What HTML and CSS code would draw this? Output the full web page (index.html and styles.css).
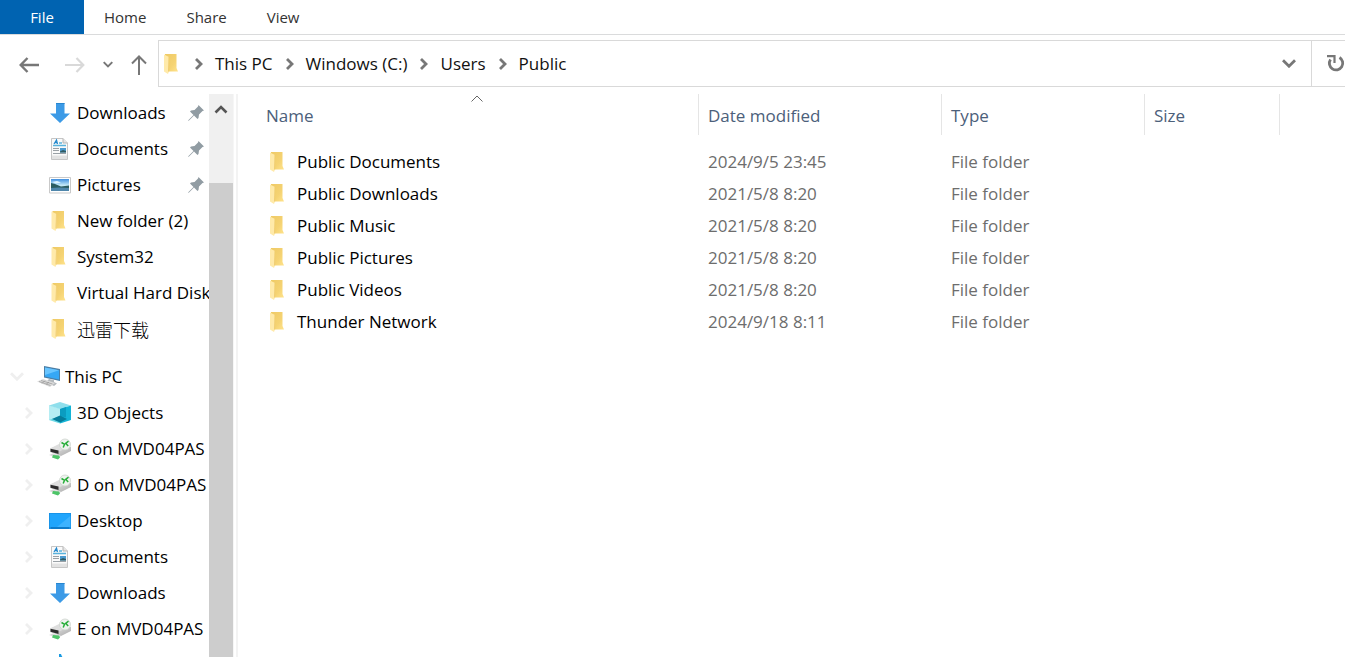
FILE: index.html
```html
<!DOCTYPE html>
<html lang="en">
<head>
<meta charset="utf-8">
<title>Public</title>
<link rel="stylesheet" href="styles.css">
</head>
<body>
<svg class="sprite" aria-hidden="true">
  <defs>
    <linearGradient id="gold" x1="0" y1="0" x2="1" y2="1"><stop offset="0" stop-color="#efca65"/><stop offset=".6" stop-color="#f5d373"/><stop offset="1" stop-color="#ffe38c"/></linearGradient>
    <linearGradient id="sky" x1="0" y1="0" x2="0" y2="1"><stop offset="0" stop-color="#3f8fe0"/><stop offset=".5" stop-color="#bfe6f7"/><stop offset="1" stop-color="#e6f5fa"/></linearGradient>
    <linearGradient id="metal" x1="0" y1="0" x2="1" y2="1"><stop offset="0" stop-color="#f0f0f0"/><stop offset="1" stop-color="#a9a9a9"/></linearGradient>
  </defs>
  <symbol id="folder" viewBox="0 0 14 20">
    <path d="M1 0H12.500V14L14 17.500H4L1 15Z" fill="url(#gold)"/>
    <path d="M0 0.500L5 3V17.500L4 20L0 17.500Z" fill="#ffeaaa"/>
    <path d="M4.500 3H5.200V17.500H4Z" fill="#f0cd72"/>
  </symbol>
  <symbol id="download" viewBox="0 0 22 22">
    <path d="M7 1H15.500V11.500H21L11 21L1 11.500H7Z" fill="#3c9ae6"/>
    <path d="M7 1H15.500V2H7Z" fill="#2786cf"/>
  </symbol>
  <symbol id="document" viewBox="0 0 22 22">
    <path d="M2.500 .5H14L18.500 5V21.500H2.500Z" fill="#fafafa" stroke="#c6c6c6"/>
    <path d="M14 .5V5H18.500" fill="#e5e5e5" stroke="#b5b5b5"/>
    <path d="M5 6L7.500 2L8.500 6M6 4.700H8.500" fill="none" stroke="#2287cc" stroke-width="1.200"/>
    <path d="M10 5H13M4 7.500H17" stroke="#59b2dc" stroke-width="1.300"/>
    <path d="M4 10.500H10M4 12.500H10M4 15.500H17" stroke="#9aa1a6"/>
    <path d="M11 10H17V14.500H11Z" fill="#4b9bd0"/>
    <path d="M11 13.500L14 12L17 13V14.500H11Z" fill="#2f5a63"/>
    <path d="M3 17.500H18V21H3Z" fill="#e2e2e2"/>
  </symbol>
  <symbol id="picture" viewBox="0 0 22 22">
    <path d="M.5 3.500H21.500V19H.5Z" fill="#fff" stroke="#c9c9c9"/>
    <path d="M2 5H20V17H2Z" fill="url(#sky)"/>
    <path d="M2 9L6 10L12 12.500L20 11.500V14.500H2Z" fill="#2b5c60"/>
    <path d="M2 14L10 13.500L20 14V17H2Z" fill="#4f86ab"/>
    <path d="M3 8L8 7L12 8.500L7 9.500Z" fill="#dff4ff"/>
  </symbol>
  <symbol id="pin" viewBox="0 0 16 16">
    <path d="M10.500 0L16 5.500L14.500 6L11 9.500L10.500 13L9.500 14L6 10.500L1 15.500L0 16L.5 15L5.500 10L2 6.500L3 5.500L6.500 5L10 1.500Z" fill="#919ca3"/>
  </symbol>
  <symbol id="computer" viewBox="0 0 24 22">
    <path d="M7 0L23 3V15L7 11.500Z" fill="#4b7ea5"/>
    <path d="M8 1.500L22 4.200V13.500L8 10.500Z" fill="#35a7f5"/>
    <path d="M8 1.500L22 4.200L8 9Z" fill="#69c5ff"/>
    <path d="M12 13L17 14V16L20 17.500L17 20L9 16Z" fill="#b4b9bd"/>
    <path d="M0 15.500L6 13L18 17L13 21Z" fill="#dcdcdc"/>
    <path d="M2 15.500L13.500 19.500M4 14.500L15.500 18M5 17.500L8 14.500M9 18.500L12 16" stroke="#969696" stroke-width=".7"/>
  </symbol>
  <symbol id="cube" viewBox="0 0 22 22">
    <path d="M0 3.500L11 0L22 3.500L11 7Z" fill="#8fdfec"/>
    <path d="M0 3.500L11 7V21.500L0 18Z" fill="#6bd8e5"/>
    <path d="M22 3.500L11 7V21.500L22 18Z" fill="#14b4d6"/>
    <path d="M0 3.500L11 7V14L0 18Z" fill="#b5edf3"/>
    <path d="M11 7L17 5V15.500L11 14Z" fill="#0b9cc0"/>
    <path d="M11 13.500L18 17L11 20.500L3 17Z" fill="#067d9b"/>
  </symbol>
  <symbol id="drive" viewBox="0 0 22 22">
    <path d="M1 10.500L10 7L22 9V13L12 18L1 14Z" fill="url(#metal)"/>
    <path d="M1 10.500L10 6L20 9L11 13Z" fill="#dedede"/>
    <path d="M1.500 10.800L9.500 12.500V16L1.500 13.800Z" fill="#2c2c2c"/>
    <path d="M0 17L9 20L12 18L4 15.500Z" fill="#d7d7d7"/>
    <path d="M4 17L10 17.500L11 19.500L9 21.500L3 19.500Z" fill="#4dc468"/>
    <circle cx="16" cy="6.500" r="5.500" fill="#eef3ee" stroke="#c8cfc8" stroke-width=".7"/>
    <path d="M12.500 4.500L15.500 6.300L14.200 9.500M19.500 3.200L16.700 5.300L19.200 8" fill="none" stroke="#28ae3a" stroke-width="1.500"/>
  </symbol>
  <symbol id="desktop" viewBox="0 0 22 22">
    <path d="M0 3H22V19H0Z" fill="#168de2"/>
    <path d="M.7 3.700H21.300V17H.7Z" fill="#20a5fc"/>
    <path d="M8 17L21.300 6V17Z" fill="#3db3ff"/>
    <path d="M2 18H20" stroke="#076bb2"/>
  </symbol>
  <symbol id="music" viewBox="0 0 22 22">
    <path d="M10 0H12C13 5 19 6 17 13C16 10 14 9 12 9V17A4 3 0 1 1 10 15Z" fill="#199ae2"/>
  </symbol>
  <symbol id="chevron" viewBox="0 0 10 12">
    <path d="M2 1L7 6L2 11" fill="none" stroke="currentColor" stroke-width="2.800"/>
  </symbol>
  <symbol id="chevron-down" viewBox="0 0 14 9">
    <path d="M1 1.200L7 7.200L13 1.200" fill="none" stroke="currentColor" stroke-width="2.800"/>
  </symbol>
</svg>

<nav class="ribbon" aria-label="Ribbon">
  <button class="tab tab-file">File</button>
  <button class="tab">Home</button>
  <button class="tab">Share</button>
  <button class="tab">View</button>
</nav>

<header class="toolbar">
  <div class="history">
    <button class="icon-button" aria-label="Back"><svg width="20" height="16" viewBox="0 0 20 16"><path d="M8.500 1L1.700 8L8.500 15M2 8H20" fill="none" stroke="currentColor" stroke-width="2.400"/></svg></button>
    <button class="icon-button forward" aria-label="Forward" disabled><svg width="20" height="16" viewBox="0 0 20 16"><path d="M11.500 1L18.300 8L11.500 15M18 8H0" fill="none" stroke="currentColor" stroke-width="2.200"/></svg></button>
    <button class="icon-button recent" aria-label="Recent locations"><svg width="10" height="7"><use href="#chevron-down"/></svg></button>
    <button class="icon-button up" aria-label="Up"><svg width="16" height="20" viewBox="0 0 16 20"><path d="M1 8.500L8 1.500L15 8.500M8 2V20" fill="none" stroke="currentColor" stroke-width="2"/></svg></button>
  </div>
  <div class="address">
    <svg class="folder" width="14" height="20"><use href="#folder"/></svg>
    <svg class="separator" width="10" height="12"><use href="#chevron"/></svg>
    <a href="#">This PC</a>
    <svg class="separator" width="10" height="12"><use href="#chevron"/></svg>
    <a href="#">Windows (C:)</a>
    <svg class="separator" width="10" height="12"><use href="#chevron"/></svg>
    <a href="#">Users</a>
    <svg class="separator" width="10" height="12"><use href="#chevron"/></svg>
    <a href="#">Public</a>
    <button class="icon-button previous" aria-label="Previous locations"><svg width="14" height="9"><use href="#chevron-down"/></svg></button>
  </div>
  <button class="icon-button refresh" aria-label="Refresh"><svg width="18" height="18" viewBox="0 0 18 18"><path d="M12.500 2.500A6.700 6.700 0 1 1 3.500 4.500" fill="none" stroke="currentColor" stroke-width="2.800"/><path d="M0 1.200H7.500V8" fill="none" stroke="currentColor" stroke-width="2.200"/></svg></button>
</header>

<div class="workspace">
  <nav class="sidebar" aria-label="Folders">
    <ul class="tree quick">
      <li><a href="#" class="node"><svg class="node-icon"><use href="#download"/></svg><span class="label">Downloads</span><svg class="pin"><use href="#pin"/></svg></a></li>
      <li><a href="#" class="node"><svg class="node-icon"><use href="#document"/></svg><span class="label">Documents</span><svg class="pin"><use href="#pin"/></svg></a></li>
      <li><a href="#" class="node"><svg class="node-icon"><use href="#picture"/></svg><span class="label">Pictures</span><svg class="pin"><use href="#pin"/></svg></a></li>
      <li><a href="#" class="node"><svg class="node-icon small"><use href="#folder"/></svg><span class="label">New folder (2)</span></a></li>
      <li><a href="#" class="node"><svg class="node-icon small"><use href="#folder"/></svg><span class="label">System32</span></a></li>
      <li><a href="#" class="node"><svg class="node-icon small"><use href="#folder"/></svg><span class="label">Virtual Hard Disk</span></a></li>
      <li><a href="#" class="node"><svg class="node-icon small"><use href="#folder"/></svg><span class="label chinese" lang="zh">迅雷下载</span></a></li>
    </ul>
    <ul class="tree">
      <li><a href="#" class="node root"><svg class="expander open"><use href="#chevron-down"/></svg><svg class="node-icon computer"><use href="#computer"/></svg><span class="label">This PC</span></a></li>
      <li><a href="#" class="node"><svg class="expander"><use href="#chevron"/></svg><svg class="node-icon"><use href="#cube"/></svg><span class="label">3D Objects</span></a></li>
      <li><a href="#" class="node"><svg class="expander"><use href="#chevron"/></svg><svg class="node-icon"><use href="#drive"/></svg><span class="label">C on MVD04PAS</span></a></li>
      <li><a href="#" class="node"><svg class="expander"><use href="#chevron"/></svg><svg class="node-icon"><use href="#drive"/></svg><span class="label">D on MVD04PAS</span></a></li>
      <li><a href="#" class="node"><svg class="expander"><use href="#chevron"/></svg><svg class="node-icon"><use href="#desktop"/></svg><span class="label">Desktop</span></a></li>
      <li><a href="#" class="node"><svg class="expander"><use href="#chevron"/></svg><svg class="node-icon"><use href="#document"/></svg><span class="label">Documents</span></a></li>
      <li><a href="#" class="node"><svg class="expander"><use href="#chevron"/></svg><svg class="node-icon"><use href="#download"/></svg><span class="label">Downloads</span></a></li>
      <li><a href="#" class="node"><svg class="expander"><use href="#chevron"/></svg><svg class="node-icon"><use href="#drive"/></svg><span class="label">E on MVD04PAS</span></a></li>
      <li><a href="#" class="node"><svg class="expander"><use href="#chevron"/></svg><svg class="node-icon"><use href="#music"/></svg></a></li>
    </ul>
  </nav>
  <div class="scrollbar">
    <button class="scroll-up" aria-label="Scroll up"><svg width="14" height="9" viewBox="0 0 14 9"><path d="M1.500 7.500L7 2L12.500 7.500" fill="none" stroke="currentColor" stroke-width="2.600"/></svg></button>
    <div class="thumb"></div>
  </div>
  <main class="files">
    <table class="file-table">
      <colgroup><col class="col-name"><col class="col-date"><col class="col-type"><col class="col-size"><col></colgroup>
      <thead>
        <tr>
          <th class="sorted">Name<svg class="sort-mark" width="12" height="7" viewBox="0 0 12 7"><path d="M.5 6.500L6 1L11.500 6.500" fill="none" stroke="#666"/></svg></th>
          <th>Date modified</th><th>Type</th><th>Size</th><td></td>
        </tr>
      </thead>
      <tbody>
        <tr><td><a href="#" class="file"><svg class="folder"><use href="#folder"/></svg>Public Documents</a></td><td>2024/9/5 23:45</td><td>File folder</td><td></td><td></td></tr>
        <tr><td><a href="#" class="file"><svg class="folder"><use href="#folder"/></svg>Public Downloads</a></td><td>2021/5/8 8:20</td><td>File folder</td><td></td><td></td></tr>
        <tr><td><a href="#" class="file"><svg class="folder"><use href="#folder"/></svg>Public Music</a></td><td>2021/5/8 8:20</td><td>File folder</td><td></td><td></td></tr>
        <tr><td><a href="#" class="file"><svg class="folder"><use href="#folder"/></svg>Public Pictures</a></td><td>2021/5/8 8:20</td><td>File folder</td><td></td><td></td></tr>
        <tr><td><a href="#" class="file"><svg class="folder"><use href="#folder"/></svg>Public Videos</a></td><td>2021/5/8 8:20</td><td>File folder</td><td></td><td></td></tr>
        <tr><td><a href="#" class="file"><svg class="folder"><use href="#folder"/></svg>Thunder Network</a></td><td>2024/9/18 8:11</td><td>File folder</td><td></td><td></td></tr>
      </tbody>
    </table>
  </main>
</div>
</body>
</html>
```
FILE: styles.css
```css
* { box-sizing: border-box; }

body {
  margin: 0;
  height: 100vh;
  display: flex;
  flex-direction: column;
  overflow: hidden;
  background: #fff;
  color: #000;
  font-family: "Open Sans", "Noto Sans CJK SC", sans-serif;
  font-size: 17px;
  line-height: 24px;
}

a { color: inherit; text-decoration: none; }
button { border: 0; padding: 0; background: none; color: inherit; font: inherit; }
svg { display: block; flex: none; }
.sprite { position: absolute; width: 0; height: 0; }

.ribbon { display: flex; flex: none; border-bottom: 1px solid #dadbdc; }
.tab { height: 34px; padding: 0 20px; font-size: 15px; color: #333; }
.tab-file { width: 84px; background: #0063b1; color: #fff; }

.toolbar { display: flex; flex: none; margin-top: 5px; height: 47px; color: #777; }
.history { width: 158px; padding: 2px 11px 0 19px; display: flex; align-items: center; }
.icon-button { display: flex; align-items: center; justify-content: center; }
.forward { margin-left: 26px; color: #d9d9d9; }
.recent { margin-left: 18px; }
.up { margin-left: auto; }
.address { flex: 1; min-width: 0; display: flex; align-items: center; padding: 0 5px; border: 1px solid #d9d9d9; color: #111; }
.address a { white-space: nowrap; }
.separator { margin: 0 11px 0 12px; color: #777; }
.address .folder { margin-right: 4px; }
.previous { margin-left: auto; width: 34px; height: 40px; color: #777; }
.refresh { width: 33px; padding-left: 15px; border: 1px solid #d9d9d9; border-width: 1px 0; overflow: hidden; justify-content: flex-start; }

.workspace { flex: 1; min-height: 0; display: flex; padding-top: 7px; }
.sidebar { width: 209px; overflow: hidden; }
.tree { list-style: none; margin: 0; padding: 0; }
.quick { margin-bottom: 12px; }
.quick .node { padding-left: 49px; }
.node { display: flex; align-items: center; height: 36px; padding-top: 1px; padding-left: 24px; }
.root { padding-left: 10px; }
.expander { width: 10px; height: 12px; margin-right: 15px; color: #efefef; }
.expander.open { width: 14px; height: 9px; margin-right: 13px; }
.node-icon { width: 22px; height: 22px; margin-right: 6px; }
.node-icon.small { width: 19px; height: 20px; margin-right: 9px; }
.node-icon.computer { width: 24px; margin-right: 4px; }
.label { white-space: nowrap; }
.chinese { font-family: "Noto Sans CJK SC", sans-serif; font-size: 18px; font-weight: 300; }
.pin { width: 16px; height: 16px; margin: 0 5px 0 auto; }

.scrollbar { flex: none; width: 25px; display: flex; flex-direction: column; background: #f0f0f0; border-right: 1px solid #f6f6f6; }
.scroll-up { flex: none; height: 30px; margin-bottom: 59px; display: flex; align-items: center; justify-content: center; color: #555; }
.thumb { flex: 1; background: #cdcdcd; }

.files { flex: 1; min-width: 0; margin-left: 2px; border-left: 2px solid #f3f3f3; }
.file-table { width: 100%; table-layout: fixed; border-collapse: separate; border-spacing: 0; }
.col-name { width: 461px; }
.col-date { width: 243px; }
.col-type { width: 203px; }
.col-size { width: 135px; }
.file-table th { position: relative; height: 41px; padding: 2px 9px 0; border-right: 1px solid #e5e5e5; text-align: left; font-weight: 400; color: #4c607a; }
.file-table .sorted { padding-left: 28px; }
.sort-mark { position: absolute; top: 1px; left: calc(50% + 3px); }
.file-table tbody::before { content: ""; display: block; height: 10px; }
.file-table td { height: 32px; padding: 2px 9px 0; color: #6d6d6d; }
.file-table thead td { padding: 0; }
.file { display: flex; align-items: center; gap: 13px; padding-left: 23px; color: #000; }
.file .folder { width: 14px; height: 20px; }
```
